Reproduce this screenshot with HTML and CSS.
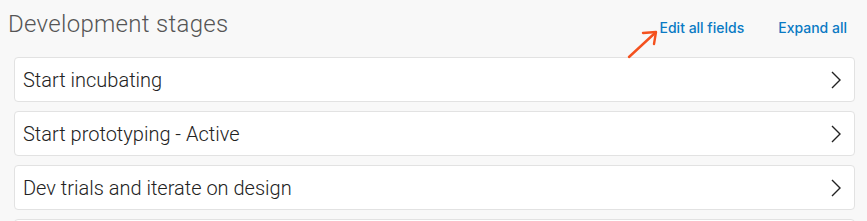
FILE: index.html
```html
<!DOCTYPE html>
<html lang="en">
<head>
    <meta charset="UTF-8">
    <title>Development stages</title>
    <link rel="stylesheet" href="styles.css">
</head>
<body>
    <div class="stages">
        <div class="stages-header">
            <h2>Development stages</h2>
            <div class="actions">
                <a href="#" class="edit-all">
                    Edit all fields
                    <svg class="arrow" width="40" height="34" viewBox="0 0 40 34">
                        <path d="M4 30 L30 6" stroke="#f4511e" stroke-width="2.4" fill="none" stroke-linecap="round"/>
                        <path d="M18 6 L31 5 L29 17" stroke="#f4511e" stroke-width="2.4" fill="none" stroke-linecap="round" stroke-linejoin="round"/>
                    </svg>
                </a>
                <a href="#">Expand all</a>
            </div>
        </div>

        <div class="stage-list">
            <div class="stage">
                <span>Start incubating</span>
                <svg class="chevron" width="12" height="18" viewBox="0 0 12 18"><path d="M2 1 L10 9 L2 17" stroke="#222" stroke-width="1.4" fill="none"/></svg>
            </div>
            <div class="stage">
                <span>Start prototyping - Active</span>
                <svg class="chevron" width="12" height="18" viewBox="0 0 12 18"><path d="M2 1 L10 9 L2 17" stroke="#222" stroke-width="1.4" fill="none"/></svg>
            </div>
            <div class="stage">
                <span>Dev trials and iterate on design</span>
                <svg class="chevron" width="12" height="18" viewBox="0 0 12 18"><path d="M2 1 L10 9 L2 17" stroke="#222" stroke-width="1.4" fill="none"/></svg>
            </div>
            <!-- next stage, only its top edge shows -->
            <div class="stage"></div>
        </div>
    </div>
</body>
</html>
```

FILE: styles.css
```css
* {
    margin: 0;
    padding: 0;
    box-sizing: border-box;
}

body {
    font-family: Roboto, "Liberation Sans", sans-serif;
    background-color: #f8f8f8;
    padding: 8px 20px 0 8px;
    overflow: hidden;
}

.stages-header {
    display: flex;
    justify-content: space-between;
    align-items: flex-start;
    height: 49px;
}

h2 {
    font-size: 24px;
    font-weight: 300;
    color: #555;
    line-height: 32px;
    letter-spacing: 0.3px;
}

.actions {
    display: flex;
    gap: 34px;
    padding-top: 11px;
}

.actions a {
    font-family: Inter, Roboto, sans-serif;
    font-size: 14px;
    font-weight: 500;
    color: #0a7ac4;
    text-decoration: none;
    position: relative;
}

.arrow {
    position: absolute;
    left: -35px;
    top: 8px;
}

.stage-list {
    display: flex;
    flex-direction: column;
    gap: 9px;
    padding-left: 6px;
    margin-right: -8px;
}

.stage {
    display: flex;
    justify-content: space-between;
    align-items: center;
    height: 45px;
    background-color: #fff;
    border: 1px solid #e2e2e2;
    border-radius: 4px;
    padding: 0 12px 0 8px;
    font-size: 20px;
    font-weight: 300;
    color: #222;
}
```
